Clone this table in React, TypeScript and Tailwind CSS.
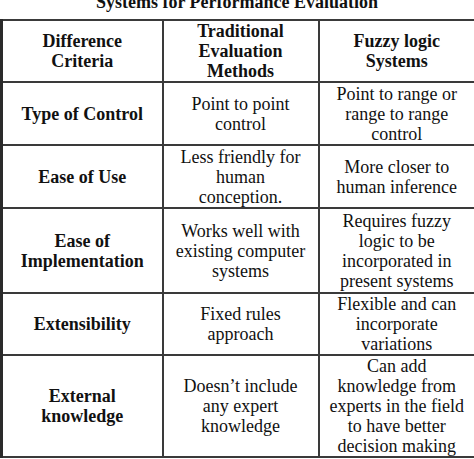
type Row = {
  criteria: string[];
  traditional: string[];
  fuzzy: string[];
  height: string;
};

const rows: Row[] = [
  {
    criteria: ["Type of Control"],
    traditional: ["Point to point", "control"],
    fuzzy: ["Point to range or", "range to range", "control"],
    height: "h-[63px]",
  },
  {
    criteria: ["Ease of Use"],
    traditional: ["Less friendly for", "human", "conception."],
    fuzzy: ["More closer to", "human inference"],
    height: "h-[63px]",
  },
  {
    criteria: ["Ease of", "Implementation"],
    traditional: ["Works well with", "existing computer", "systems"],
    fuzzy: ["Requires fuzzy", "logic to be", "incorporated in", "present systems"],
    height: "h-[85px]",
  },
  {
    criteria: ["Extensibility"],
    traditional: ["Fixed rules", "approach"],
    fuzzy: ["Flexible and can", "incorporate", "variations"],
    height: "h-[61px]",
  },
  {
    criteria: ["External", "knowledge"],
    traditional: ["Doesn\u2019t include", "any expert", "knowledge"],
    fuzzy: ["Can add", "knowledge from", "experts in the field", "to have better", "decision making"],
    height: "h-[102px]",
  },
];

function Lines({ lines }: { lines: string[] }) {
  return (
    <>
      {lines.map((line) => (
        <div key={line} className="whitespace-nowrap">
          {line}
        </div>
      ))}
    </>
  );
}

const cell = "border-2 border-[#3a3a3a] px-1 py-0 text-center align-middle";

export default function App() {
  return (
    <div className="w-[474px] h-[459px] overflow-hidden bg-white text-[#111] font-['Liberation_Serif','Times_New_Roman',serif]">
      <div className="-mt-[7px] mb-[8px] text-center text-[18px] leading-[18px] font-bold">
        Systems for Performance Evaluation
      </div>
      <table className="w-[474px] table-fixed border-collapse border-t-2 border-l-[3px] border-r-[3px] border-t-[#333] border-l-[#2a2a2a] border-r-[#777] text-[18px] leading-[20px]">
        <colgroup>
          <col className="w-[161px]" />
          <col className="w-[156px]" />
          <col className="w-[157px]" />
        </colgroup>
        <thead>
          <tr className="h-[61px]">
            <th className={`${cell} font-bold`}>
              <Lines lines={["Difference", "Criteria"]} />
            </th>
            <th className={`${cell} font-bold`}>
              <Lines lines={["Traditional", "Evaluation", "Methods"]} />
            </th>
            <th className={`${cell} font-bold`}>
              <Lines lines={["Fuzzy logic", "Systems"]} />
            </th>
          </tr>
        </thead>
        <tbody>
          {rows.map((row) => (
            <tr key={row.criteria.join(" ")} className={row.height}>
              <td className={`${cell} font-bold`}>
                <Lines lines={row.criteria} />
              </td>
              <td className={cell}>
                <Lines lines={row.traditional} />
              </td>
              <td className={cell}>
                <Lines lines={row.fuzzy} />
              </td>
            </tr>
          ))}
        </tbody>
      </table>
    </div>
  );
}
